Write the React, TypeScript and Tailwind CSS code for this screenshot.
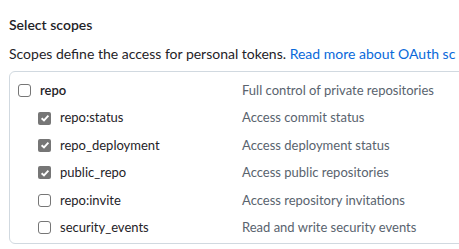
const scopes = [
  { name: "repo", desc: "Full control of private repositories", checked: false, child: false, bold: true },
  { name: "repo:status", desc: "Access commit status", checked: true, child: true },
  { name: "repo_deployment", desc: "Access deployment status", checked: true, child: true },
  { name: "public_repo", desc: "Access public repositories", checked: true, child: true },
  { name: "repo:invite", desc: "Access repository invitations", checked: false, child: true },
  { name: "security_events", desc: "Read and write security events", checked: false, child: true },
];

function Checkbox({ checked }: { checked: boolean }) {
  if (checked) {
    return (
      <span className="flex h-[13px] w-[13px] shrink-0 items-center justify-center rounded-[2px] bg-[#767676]">
        <svg width="10" height="10" viewBox="0 0 10 10" fill="none">
          <path d="M1.6 5.2 L4 7.5 L8.4 2.6" stroke="white" strokeWidth="1.9" />
        </svg>
      </span>
    );
  }
  return (
    <span className="h-[13px] w-[13px] shrink-0 rounded-[3px] border border-[#767676] bg-white" />
  );
}

export default function App() {
  return (
    <div
      className="h-[249px] w-[459px] overflow-hidden bg-white px-[9px] pt-[14px] text-[14px] text-[#1f2328]"
      style={{ fontFamily: '"Lato", "Liberation Sans", sans-serif' }}
    >
      <h3 className="text-[14px] font-semibold leading-[21px]">Select scopes</h3>
      <p className="mt-[8px] whitespace-nowrap leading-[21px]">
        Scopes define the access for personal tokens.{" "}
        <a className="text-[#0969da]">Read more about OAuth sc</a>
      </p>
      <div className="mt-[7px] w-[600px] rounded-md border border-[#d1d9e0] pt-[5px] pb-[1.5px] text-[13px]">
        {scopes.map((s) => (
          <div key={s.name} className="flex h-[27.4px] items-center">
            <div
              className={`flex w-[232px] items-center gap-[9px] ${s.child ? "pl-[28px]" : "pl-[8px]"}`}
            >
              <Checkbox checked={s.checked} />
              <span className={s.bold ? "font-semibold" : ""}>{s.name}</span>
            </div>
            <span className="text-[#59636e]">{s.desc}</span>
          </div>
        ))}
      </div>
    </div>
  );
}
